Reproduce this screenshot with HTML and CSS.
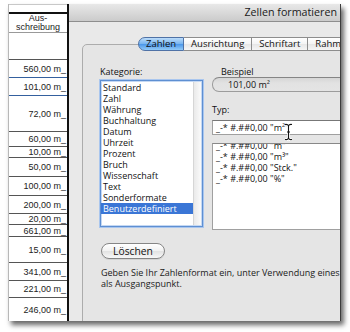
FILE: index.html
```html
<!DOCTYPE html>
<html>
<head>
<meta charset="utf-8">
<link rel="stylesheet" href="styles.css">
</head>
<body>
<div class="shot">
  <div class="sheet">
    <div class="row blank"></div>
    <div class="row head">Aus-<br>schreibung</div>
    <div class="row h27"></div>
    <div class="row h18 presel">560,00 m_</div>
    <div class="row h18 sel">101,00 m_</div>
    <div class="row h36">72,00 m_</div>
    <div class="row h15">60,00 m_</div>
    <div class="row h11">10,00 m_</div>
    <div class="row h19">50,00 m_</div>
    <div class="row h19">100,00 m_</div>
    <div class="row h18">200,00 m_</div>
    <div class="row h11">20,00 m_</div>
    <div class="row h12">661,00 m_</div>
    <div class="row h26">15,00 m_</div>
    <div class="row h18">341,00 m_</div>
    <div class="row h17">221,00 m_</div>
    <div class="row h23 last">246,00 m_</div>
  </div>
  <div class="dialog">
    <div class="titlebar">Zellen formatieren</div>
    <div class="body">
      <div class="tabs">
        <div class="tab active">Zahlen</div>
        <div class="tab">Ausrichtung</div>
        <div class="tab">Schriftart</div>
        <div class="tab">Rahmen</div>
      </div>
      <div class="panel">
        <div class="cols">
          <div class="left">
            <div class="label">Kategorie:</div>
            <div class="catlist">
              <div class="items">
                <div class="item">Standard</div>
                <div class="item">Zahl</div>
                <div class="item">Währung</div>
                <div class="item">Buchhaltung</div>
                <div class="item">Datum</div>
                <div class="item">Uhrzeit</div>
                <div class="item">Prozent</div>
                <div class="item">Bruch</div>
                <div class="item">Wissenschaft</div>
                <div class="item">Text</div>
                <div class="item">Sonderformate</div>
                <div class="item chosen">Benutzerdefiniert</div>
              </div>
              <div class="track"></div>
            </div>
          </div>
          <div class="right">
            <div class="label indent">Beispiel</div>
            <div class="sample">101,00 m²</div>
            <div class="label typ">Typ:</div>
            <div class="input">_-* #.##0,00 "m²"
              <svg class="ibeam" width="9" height="18" viewBox="0 0 9 18">
                <path d="M1 1.5 Q4.5 1 4.5 3.5 Q4.5 1 8 1.5 M4.5 3.5 V14.5 M1 16.5 Q4.5 17 4.5 14.5 Q4.5 17 8 16.5 M3 9 H6" fill="none" stroke="#fff" stroke-width="2.6"/>
                <path d="M1 1.5 Q4.5 1 4.5 3.5 Q4.5 1 8 1.5 M4.5 3.5 V14.5 M1 16.5 Q4.5 17 4.5 14.5 Q4.5 17 8 16.5 M3 9 H6" fill="none" stroke="#111" stroke-width="1.1"/>
              </svg>
            </div>
            <div class="typlist">
              <div class="titem first">_-* #.##0,00 "m"</div>
              <div class="titem">_-* #.##0,00 "m³"</div>
              <div class="titem">_-* #.##0,00 "Stck."</div>
              <div class="titem">_-* #.##0,00 "%"</div>
            </div>
          </div>
        </div>
        <div class="btn">Löschen</div>
        <p class="help">Geben Sie Ihr Zahlenformat ein, unter Verwendung eines<br>als Ausgangspunkt.</p>
      </div>
    </div>
  </div>
</div>
</body>
</html>
```

FILE: styles.css
```css
* { box-sizing: border-box; }
html, body { margin: 0; padding: 0; background: #fff; }
body { width: 350px; height: 332px; overflow: hidden; }

.shot {
  margin: 4px 0 0 8px;
  width: 333px;
  height: 317px;
  display: flex;
  box-shadow: 3px 4px 5px rgba(0,0,0,0.6);
  background: #e9e9e9;
}

/* spreadsheet column */
.sheet {
  width: 61px;
  height: 317px;
  background: #fff;
  border-left: 1px solid #b8b8b8;
  border-right: 2px solid #111;
  font-family: "Liberation Sans", Arial, sans-serif;
  font-size: 9px;
  color: #222;
  display: flex;
  flex-direction: column;
}
.row {
  display: flex;
  align-items: center;
  justify-content: flex-end;
  padding-right: 1px;
  border-bottom: 1px solid #555;
  flex: none;
  white-space: nowrap;
}
.row.blank { height: 8px; border-top: 1px solid #c8c8c8; border-bottom: none; }
.row.head {
  height: 21px;
  border-top: 2px solid #111;
  border-bottom: 1px solid #999;
  justify-content: center;
  text-align: center;
  line-height: 9px;
  padding-right: 0;
}
.row.presel, .row.sel { border-bottom-color: #34609e; }
.row.last { border-bottom: none; }
.h11 { height: 11px; }
.h12 { height: 12px; }
.h15 { height: 15px; }
.h17 { height: 17px; }
.h18 { height: 18px; }
.h19 { height: 19px; }
.h23 { height: 23px; }
.h26 { height: 26px; }
.h27 { height: 27px; }
.h36 { height: 36px; }

/* dialog */
.dialog {
  width: 272px;
  height: 317px;
  overflow: hidden;
  border-right: 1px solid #3c3c3c;
  font-family: "Open Sans", "Noto Sans", "DejaVu Sans", sans-serif;
  color: #111;
  background: #e9e9e9;
}
.titlebar {
  height: 18px;
  line-height: 17px;
  background: linear-gradient(#e8e8e8, #cbcbcb);
  border-bottom: 1px solid #8e8e8e;
  text-align: right;
  padding-right: 3px;
  font-size: 10.7px;
  color: #1a1a1a;
  white-space: nowrap;
}
.body {
  padding-top: 15px;
}
.tabs {
  position: relative;
  z-index: 1;
  margin-left: 69px;
  display: flex;
  height: 14px;
  white-space: nowrap;
}
.tab {
  height: 14px;
  line-height: 12px;
  padding: 0 7px;
  font-size: 9.5px;
  border: 1px solid #8d8d8d;
  border-left: none;
  background: linear-gradient(#ffffff, #f4f4f4 50%, #e6e6e6 51%, #f6f6f6);
  flex: none;
}
.tab.active {
  border: 1px solid #4f72a6;
  border-radius: 7px 0 0 7px;
  background: linear-gradient(#bcdcfa, #78b5f0 48%, #4b97ea 52%, #93cbf8);
}
.panel {
  margin-left: 13px;
  margin-top: -7px;
  width: 300px;
  height: 300px;
  border: 1px solid #acacac;
  border-radius: 5px;
  background: #e5e5e5;
  padding: 22px 0 0 17px;
}
.cols {
  display: flex;
  align-items: flex-start;
}
.left { width: 103px; flex: none; }
.right { margin-left: 9px; width: 200px; flex: none; }
.label {
  font-size: 9px;
  line-height: 10px;
  height: 10px;
  white-space: nowrap;
}
.label.indent { padding-left: 9px; }
.label.typ { margin-top: 13px; }

.catlist {
  margin-top: 3px;
  height: 147px;
  border: 1px solid #5e8fd2;
  box-shadow: 0 0 0 1px #a9c6ee, inset 0 0 0 1px #c4d8f3;
  background: #fff;
  display: flex;
}
.items {
  flex: 1;
  padding-top: 1px;
}
.item {
  height: 11px;
  line-height: 11px;
  font-size: 9px;
  padding-left: 2px;
  white-space: nowrap;
}
.item.chosen {
  background: #3a76d6;
  color: #fff;
}
.track {
  width: 8px;
  margin: 1px 1px 1px 0;
  background: linear-gradient(90deg, #eaeaea, #fafafa);
  border-left: 1px solid #d6d6d6;
}

.sample {
  height: 15px;
  line-height: 13px;
  border: 1px solid #9c9c9c;
  border-top-color: #858585;
  border-radius: 7px 0 0 7px;
  background: linear-gradient(#d6d6d6, #e2e2e2 40%, #e4e4e4);
  padding-left: 15px;
  font-size: 9px;
  white-space: nowrap;
}
.input {
  position: relative;
  margin-top: 5px;
  height: 15px;
  line-height: 13px;
  background: #fff;
  border: 1px solid #a0a0a0;
  border-top-color: #777;
  padding-left: 3px;
  font-size: 9px;
  white-space: nowrap;
}
.ibeam {
  position: absolute;
  left: 71px;
  top: 2px;
}
.typlist {
  margin-top: 8px;
  height: 87px;
  background: #fff;
  border: 1px solid #a0a0a0;
  border-top-color: #888;
  overflow: hidden;
}
.titem {
  height: 11px;
  line-height: 11px;
  font-size: 9px;
  padding-left: 3px;
  white-space: nowrap;
}
.titem.first { margin-top: -4px; }

.btn {
  margin-top: 13px;
  margin-left: 1px;
  width: 64px;
  height: 16px;
  line-height: 14px;
  text-align: center;
  font-size: 10.3px;
  border: 1px solid #858585;
  border-radius: 8px;
  background: linear-gradient(#ffffff, #f1f1f1 50%, #e2e2e2 51%, #f7f7f7);
  box-shadow: 0 1px 0 rgba(0,0,0,0.08);
  color: #111;
}
.help {
  margin: 9px 0 0 1px;
  font-size: 9px;
  line-height: 10.5px;
  white-space: nowrap;
  color: #1a1a1a;
}
```
